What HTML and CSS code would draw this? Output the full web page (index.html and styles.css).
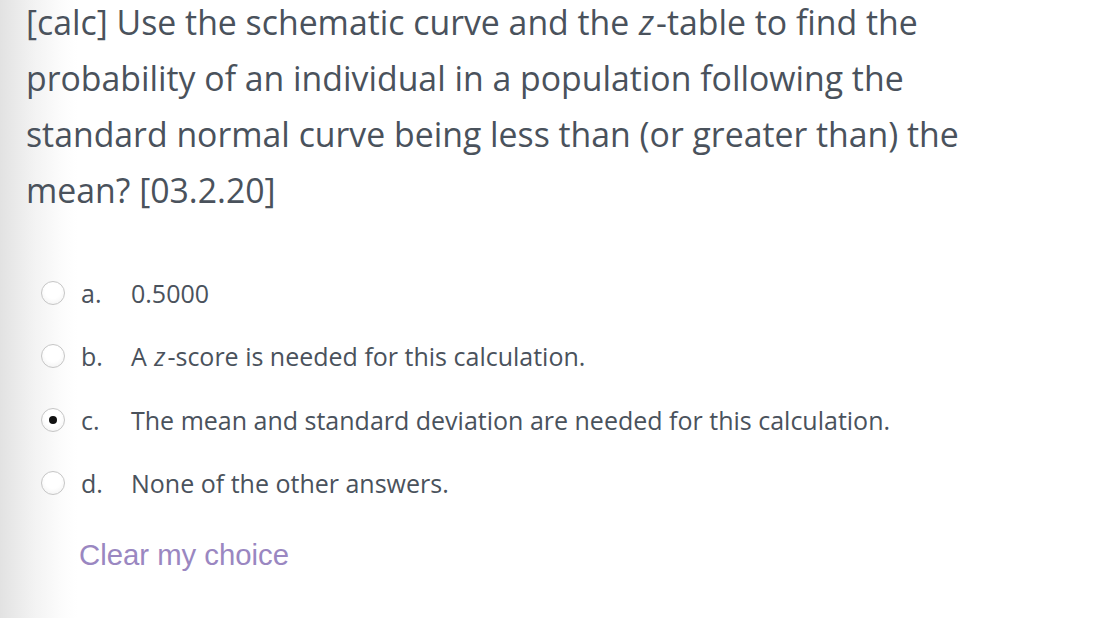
FILE: index.html
```html
<!DOCTYPE html>
<html lang="en">
<head>
<meta charset="utf-8">
<title>Question</title>
<link rel="stylesheet" href="styles.css">
</head>
<body>
<div class="page">
  <div class="qtext">[calc] Use the schematic curve and the <i class="var">z</i>-table to find the probability of an individual in a population following the standard normal curve being less than (or greater than) the mean? [03.2.20]</div>
  <div class="answers">
    <label class="opt"><span class="radio"></span><span class="letter">a.</span><span class="atext">0.5000</span></label>
    <label class="opt"><span class="radio"></span><span class="letter">b.</span><span class="atext">A <i class="var">z</i>-score is needed for this calculation.</span></label>
    <label class="opt"><span class="radio checked"></span><span class="letter">c.</span><span class="atext">The mean and standard deviation are needed for this calculation.</span></label>
    <label class="opt"><span class="radio"></span><span class="letter">d.</span><span class="atext">None of the other answers.</span></label>
  </div>
  <div class="clear">Clear my choice</div>
</div>
</body>
</html>
```
FILE: styles.css
```css
html, body {
  margin: 0;
  padding: 0;
  height: 100%;
}
body {
  background: linear-gradient(to right, #e2e2e2 0px, #f3f3f3 35px, #fdfdfd 65px, #ffffff 78px);
  color: #4a525c;
  font-family: "Open Sans", "Lato", sans-serif;
  font-variant-ligatures: none;
}
.page {
  padding: 0 0 0 26px;
}
.qtext {
  font-size: 33.8px;
  line-height: 56px;
  margin-top: -6px;
  width: 960px;
}
.var {
  margin: 0 2px 0 1px;
}
.answers {
  margin-top: 43px;
  display: flex;
  flex-direction: column;
}
.opt {
  display: flex;
  align-items: center;
  height: 63.5px;
  font-size: 25px;
}
.radio {
  width: 24px;
  height: 24px;
  border-radius: 50%;
  border: 1px solid #c6c6c6;
  background: radial-gradient(circle at 50% 40%, #ffffff 45%, #eeeeee 100%);
  margin-left: 15px;
  margin-right: 16px;
  box-sizing: border-box;
  display: flex;
  align-items: center;
  justify-content: center;
}
.radio.checked::after {
  content: "";
  width: 8px;
  height: 8px;
  border-radius: 50%;
  background: #111;
}
.letter {
  width: 50px;
}
.clear {
  margin-top: 23px;
  margin-left: 53px;
  font-family: "Liberation Sans", Arial, sans-serif;
  font-size: 29.3px;
  color: #9a87c1;
}
```
